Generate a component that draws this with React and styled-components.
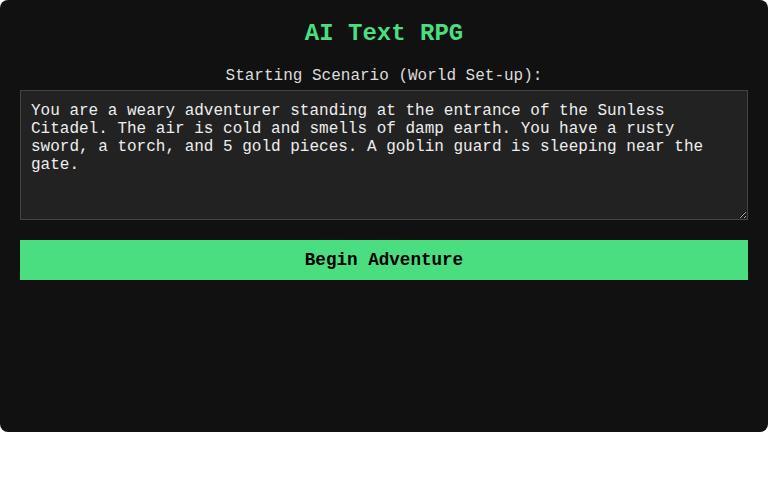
import React from "react";
import styled, { createGlobalStyle } from "styled-components";

const GlobalStyle = createGlobalStyle`
  * { box-sizing: border-box; }
  body {
    margin: 0;
    background: #ffffff;
    font-family: "Liberation Mono", "DejaVu Sans Mono", monospace;
  }
`;

const Container = styled.div`
  height: 432px;
  background: #111111;
  border-radius: 8px;
  padding: 20px;
  display: flex;
  flex-direction: column;
`;

const Title = styled.h1`
  margin: 0 0 20px;
  font-size: 24px;
  line-height: 27px;
  font-weight: bold;
  color: #4ade80;
  text-align: center;
`;

const Label = styled.label`
  display: block;
  text-align: center;
  font-size: 16px;
  line-height: 18px;
  color: #dddddd;
  margin-bottom: 5px;
`;

const Scenario = styled.textarea`
  width: 100%;
  height: 130px;
  background: #222222;
  border: 1px solid #444444;
  color: #eeeeee;
  font-family: "Liberation Mono", "DejaVu Sans Mono", monospace;
  font-size: 16px;
  line-height: 18px;
  padding: 11px 10px 9px;
  margin: 0;
  outline: none;
  display: block;
`;

const Button = styled.button`
  margin-top: 20px;
  width: 100%;
  height: 40px;
  background: #4ade80;
  border: none;
  color: #000000;
  font-family: "Liberation Mono", "DejaVu Sans Mono", monospace;
  font-size: 17.6px;
  font-weight: bold;
  cursor: pointer;
`;

const scenario =
  "You are a weary adventurer standing at the entrance of the Sunless Citadel. The air is cold and smells of damp earth. You have a rusty sword, a torch, and 5 gold pieces. A goblin guard is sleeping near the gate.";

export default function App() {
  return (
    <>
      <GlobalStyle />
      <Container>
        <Title>AI Text RPG</Title>
        <Label htmlFor="scenario">Starting Scenario (World Set-up):</Label>
        <Scenario id="scenario" defaultValue={scenario} />
        <Button>Begin Adventure</Button>
      </Container>
    </>
  );
}
